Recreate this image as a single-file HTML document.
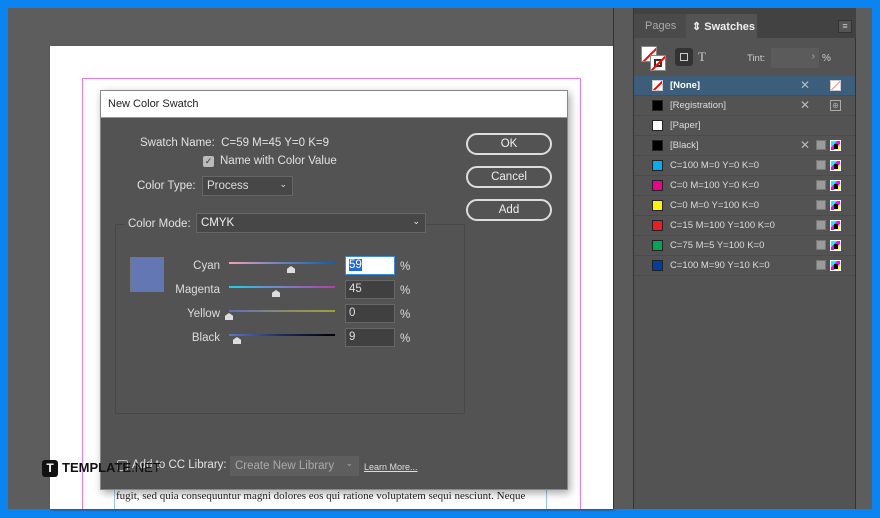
<!DOCTYPE html>
<html><head><meta charset="utf-8"><style>
*{margin:0;padding:0;box-sizing:border-box}
body{width:880px;height:518px;background:#0a84f0;position:relative;overflow:hidden;font-family:"Liberation Sans",sans-serif}
.a{position:absolute}
.t{color:#e2e2e2;font-size:11.5px;white-space:nowrap}
.row{position:absolute;left:634px;width:221px;height:20px;border-bottom:1px solid #4b4b4b}
.sw{position:absolute;left:18px;top:4px;width:11px;height:11px;border:1px solid #222}
.rl{position:absolute;left:36px;top:4px;color:#ddd;font-size:9.5px;white-space:nowrap}
.g{position:absolute;left:182px;top:4px;width:10px;height:10px;background:#9a9a9a;border:1px solid #777}
.c{position:absolute;left:196px;top:4px;width:11px;height:11px;background:linear-gradient(135deg,#0ff 0 35%,#f0f 35% 65%,#ff0 65%);border:1px solid #fff}
.c:after{content:"";position:absolute;left:3px;top:3px;width:4px;height:5px;background:#000}
.btn{position:absolute;left:466px;width:86px;height:22px;border:2px solid #ddd;border-radius:11px;color:#eee;font-size:11.5px;text-align:center;line-height:18px}
.inp{position:absolute;left:345px;width:50px;height:19px;background:#404040;border:1px solid #666;color:#ddd;font-size:11.5px;padding-left:3px;line-height:17px}
.sl{position:absolute;left:229px;width:106px;height:2px}
.th{position:absolute;width:8px;height:7px;background:#ddd;clip-path:polygon(50% 0,100% 40%,100% 100%,0 100%,0 40%)}
.lab{position:absolute;color:#ddd;font-size:11.5px;text-align:right;width:60px;left:160px}
.pct{position:absolute;left:400px;color:#ddd;font-size:11.5px}
</style></head><body>
<div class="a" style="left:8px;top:8px;width:864px;height:501px;background:#5d5d5d"></div>
<div class="a" style="left:50px;top:46px;width:563px;height:463px;background:#fff;box-shadow:1px 1px 2px #444"></div>
<div class="a" style="left:82px;top:78px;width:499px;height:431px;border:1px solid #e07ef0;border-bottom:none"></div>
<div class="a" style="left:114px;top:480px;width:433px;height:29px;border:1px solid #9cc6f0;border-bottom:none"></div>
<div class="a" style="left:116px;top:490px;font-family:'Liberation Serif',serif;font-size:11px;color:#222;white-space:nowrap">fugit, sed quia consequuntur magni dolores eos qui ratione voluptatem sequi nesciunt. Neque</div>
<div class="a" style="left:100px;top:90px;width:468px;height:400px;background:#535353;border:1px solid #888;box-shadow:2px 3px 8px rgba(0,0,0,.35)"></div>
<div class="a" style="left:101px;top:91px;width:466px;height:27px;background:#fff;border-bottom:1px solid #999"></div>
<div class="a" style="left:108px;top:98px;font-size:11px;color:#222">New Color Swatch</div>
<div class="a t" style="left:140px;top:137px">Swatch Name:&nbsp; C=59 M=45 Y=0 K=9</div>
<div class="a" style="left:203px;top:156px;width:11px;height:11px;background:#bbb;border-radius:2px;color:#333;font-size:9px;line-height:11px;text-align:center">✓</div>
<div class="a t" style="left:220px;top:155px">Name with Color Value</div>
<div class="a t" style="left:137px;top:180px">Color Type:</div>
<div class="a" style="left:202px;top:176px;width:91px;height:20px;background:#474747;border:1px solid #666;color:#ddd;font-size:11.5px;padding:3px 4px">Process<span style="position:absolute;right:5px;top:2px;font-size:9px">⌄</span></div>
<div class="btn" style="top:133px">OK</div>
<div class="btn" style="top:166px">Cancel</div>
<div class="btn" style="top:199px">Add</div>
<div class="a" style="left:115px;top:224px;width:350px;height:190px;border:1px solid #474747;border-radius:2px"></div>
<div class="a" style="left:124px;top:214px;width:302px;height:20px;background:#535353"></div>
<div class="a t" style="left:128px;top:218px">Color Mode:</div>
<div class="a" style="left:196px;top:213px;width:230px;height:20px;background:#474747;border:1px solid #666;color:#eee;font-size:11.5px;padding:3px 4px">CMYK<span style="position:absolute;right:5px;top:2px;font-size:9px">⌄</span></div>
<div class="a" style="left:130px;top:257px;width:34px;height:35px;background:#6277b4;border:1px solid #777"></div>
<div class="lab" style="top:260px">Cyan</div>
<div class="lab" style="top:284px">Magenta</div>
<div class="lab" style="top:308px">Yellow</div>
<div class="lab" style="top:332px">Black</div>
<div class="sl" style="top:262px;background:linear-gradient(90deg,#f3a0b8,#6a80c0,#0a5fb0)"></div>
<div class="sl" style="top:286px;background:linear-gradient(90deg,#1ad0f0,#7a80c8,#b040b0)"></div>
<div class="sl" style="top:310px;background:linear-gradient(90deg,#5a70b8,#8a8a70,#a0a030)"></div>
<div class="sl" style="top:334px;background:linear-gradient(90deg,#5a78c8,#202a60,#000)"></div>
<div class="th" style="left:287px;top:266px"></div>
<div class="th" style="left:272px;top:290px"></div>
<div class="th" style="left:225px;top:313px"></div>
<div class="th" style="left:233px;top:337px"></div>
<div class="inp" style="top:256px;background:#fff;border:1px solid #3a8ae0;color:#fff"><span style="background:#1f6ad6">59</span></div>
<div class="inp" style="top:280px">45</div>
<div class="inp" style="top:304px">0</div>
<div class="inp" style="top:328px">9</div>
<div class="pct" style="top:261px">%</div>
<div class="pct" style="top:285px">%</div>
<div class="pct" style="top:309px">%</div>
<div class="pct" style="top:333px">%</div>
<div class="a" style="left:117px;top:460px;width:11px;height:11px;border:1px solid #bbb;border-radius:2px"></div>
<div class="a t" style="left:132px;top:459px">Add to CC Library:</div>
<div class="a" style="left:230px;top:456px;width:129px;height:20px;background:#5e5e5e;color:#aaa;font-size:11.5px;padding:4px 5px">Create New Library<span style="position:absolute;right:6px;top:2px;font-size:9px">⌄</span></div>
<div class="a" style="left:364px;top:462px;color:#ddd;font-size:9px;text-decoration:underline">Learn More...</div>
<div class="a" style="left:42px;top:460px;width:16px;height:17px;background:#111;border-radius:3px;color:#fff;font-weight:bold;font-size:12px;text-align:center;line-height:17px">T</div>
<div class="a" style="left:62px;top:460px;font-weight:bold;font-size:13px;color:#111">TEMPLATE<span style="font-weight:normal">.NET</span></div>
<div class="a" style="left:613px;top:8px;width:21px;height:501px;background:#5a5a5a;border-left:1px solid #333;border-right:1px solid #333"></div>
<div class="a" style="left:634px;top:8px;width:222px;height:501px;background:#535353;border-right:1px solid #333"></div>
<div class="a" style="left:634px;top:8px;width:222px;height:30px;background:#424242"></div>
<div class="a" style="left:634px;top:14px;width:52px;height:24px;background:#4a4a4a;color:#aaa;font-size:11px;padding:6px 0 0 11px">Pages</div>
<div class="a" style="left:686px;top:14px;width:71px;height:24px;background:#535353;color:#eee;font-size:11px;font-weight:bold;padding:6px 0 0 6px">⇕ Swatches</div>
<div class="a" style="left:838px;top:20px;width:14px;height:13px;border:1px solid #333;background:#555;color:#ccc;font-size:9px;text-align:center;line-height:11px">≡</div>
<div class="a" style="left:641px;top:46px;width:16px;height:16px;background:#fff;border:1px solid #888;overflow:hidden"><div style="position:absolute;left:-4px;top:7px;width:24px;height:2px;background:red;transform:rotate(-45deg)"></div></div>
<div class="a" style="left:650px;top:55px;width:16px;height:16px;background:#fff;border:1px solid #888;overflow:hidden"><div style="position:absolute;left:3px;top:3px;width:8px;height:8px;border:2px solid #333"></div><div style="position:absolute;left:-4px;top:6px;width:24px;height:2px;background:red;transform:rotate(-45deg)"></div></div>
<div class="a" style="left:675px;top:48px;width:18px;height:18px;background:#333;border-radius:3px"><div style="position:absolute;left:5px;top:5px;width:8px;height:8px;border:1px solid #ccc"></div></div>
<div class="a" style="left:698px;top:49px;color:#ccc;font-family:'Liberation Serif',serif;font-size:13px">T</div>
<div class="a" style="left:747px;top:53px;color:#ccc;font-size:9.5px">Tint:</div>
<div class="a" style="left:771px;top:48px;width:48px;height:20px;background:#5b5b5b;color:#aaa;font-size:10px;text-align:right;padding:3px 4px">›</div>
<div class="a" style="left:822px;top:53px;color:#ccc;font-size:10px">%</div>
<div class="row" style="top:76px;background:#3c5e7a"><div class="sw" style="background:#fff;overflow:hidden;border-color:#ccc"><div style="position:absolute;left:-3px;top:4px;width:16px;height:2px;background:red;transform:rotate(-45deg)"></div></div><div class="rl" style="color:#fff;font-weight:bold">[None]</div><div class="a" style="left:166px;top:2px;color:#bbb;font-size:12px">✕</div><div class="a" style="left:196px;top:4px;width:11px;height:11px;background:#fff;overflow:hidden;border:1px solid #ccc"><div style="position:absolute;left:-3px;top:4px;width:16px;height:1px;background:#f88;transform:rotate(-45deg)"></div></div></div>
<div class="row" style="top:96px"><div class="sw" style="background:#000"></div><div class="rl">[Registration]</div><div class="a" style="left:166px;top:2px;color:#bbb;font-size:12px">✕</div><div class="a" style="left:196px;top:4px;width:11px;height:11px;border:1px solid #aaa;color:#aaa;font-size:8px;line-height:9px;text-align:center">⊕</div></div>
<div class="row" style="top:116px"><div class="sw" style="background:#fff"></div><div class="rl">[Paper]</div></div>
<div class="row" style="top:136px"><div class="sw" style="background:#000"></div><div class="rl">[Black]</div><div class="a" style="left:166px;top:2px;color:#bbb;font-size:12px">✕</div><div class="g"></div><div class="c"></div></div>
<div class="row" style="top:156px"><div class="sw" style="background:#00aeef"></div><div class="rl">C=100 M=0 Y=0 K=0</div><div class="g"></div><div class="c"></div></div>
<div class="row" style="top:176px"><div class="sw" style="background:#ec008c"></div><div class="rl">C=0 M=100 Y=0 K=0</div><div class="g"></div><div class="c"></div></div>
<div class="row" style="top:196px"><div class="sw" style="background:#fff200"></div><div class="rl">C=0 M=0 Y=100 K=0</div><div class="g"></div><div class="c"></div></div>
<div class="row" style="top:216px"><div class="sw" style="background:#ed1c24"></div><div class="rl">C=15 M=100 Y=100 K=0</div><div class="g"></div><div class="c"></div></div>
<div class="row" style="top:236px"><div class="sw" style="background:#00a651"></div><div class="rl">C=75 M=5 Y=100 K=0</div><div class="g"></div><div class="c"></div></div>
<div class="row" style="top:256px"><div class="sw" style="background:#003f9f"></div><div class="rl">C=100 M=90 Y=10 K=0</div><div class="g"></div><div class="c"></div></div>
</body></html>
